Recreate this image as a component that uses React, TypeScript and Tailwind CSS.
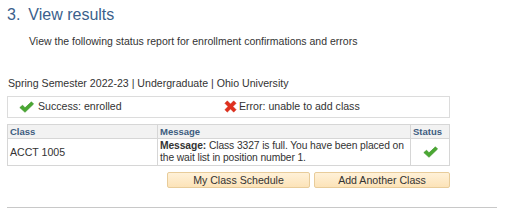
export default function App() {
  return (
    <div className="w-[529px] h-[209px] bg-white overflow-hidden font-['Liberation_Sans',Arial,sans-serif] text-[#333]">
      <div className="pl-[7px] pt-[6px]">
        {/* HEADING */}
        <h1 className="text-[16px] leading-[18px] text-[#3b5f8c]">
          <span>3.</span>
          <span className="ml-[8px]">View results</span>
        </h1>

        <p className="mt-[11px] ml-[22px] text-[10.5px] leading-[13px] text-[#333]">
          View the following status report for enrollment confirmations and errors
        </p>

        <p className="mt-[29px] ml-[1px] text-[10.6px] leading-[13px] text-[#333]">
          Spring Semester 2022-23 | Undergraduate | Ohio University
        </p>

        {/* LEGEND */}
        <div className="mt-[6px] w-[443px] h-[22px] border border-[#dcdcdc] flex items-center text-[10.6px]">
          <div className="flex items-center ml-[11px] w-[205px]">
            <Check />
            <span className="ml-[4px]">Success: enrolled</span>
          </div>
          <div className="flex items-center">
            <Cross />
            <span className="ml-[2px]">Error: unable to add class</span>
          </div>
        </div>

        {/* RESULTS TABLE */}
        <table className="mt-[6px] w-[443px] border-collapse border border-[#d6d6d6] text-[10.6px]">
          <thead>
            <tr className="bg-[#f2f2f2] h-[14px]">
              <th className="text-left font-bold text-[9.5px] leading-[12px] text-[#3e5d80] px-[2px] py-0 border border-[#d6d6d6] w-[150px]">Class</th>
              <th className="text-left font-bold text-[9.5px] leading-[12px] text-[#3e5d80] px-[2px] py-0 border border-[#d6d6d6] w-[253px]">Message</th>
              <th className="text-left font-bold text-[9.5px] leading-[12px] text-[#3e5d80] px-[2px] py-0 border border-[#d6d6d6]">Status</th>
            </tr>
          </thead>
          <tbody>
            <tr className="h-[27px]">
              <td className="px-[2px] py-0 border border-[#d6d6d6] leading-[12px]">ACCT 1005</td>
              <td className="px-[2px] py-0 border border-[#d6d6d6] leading-[12px] text-[10.3px] tracking-[-0.1px]">
                <b>Message:</b> Class 3327 is full. You have been placed on the wait list in position number 1.
              </td>
              <td className="border border-[#d6d6d6]">
                <div className="flex justify-center">
                  <Check />
                </div>
              </td>
            </tr>
          </tbody>
        </table>

        {/* BUTTONS */}
        <div className="mt-[6px] w-[443px] flex justify-end gap-[4px]">
          <button className="w-[143px] h-[16px] rounded-[2px] border border-[#e8cc9a] bg-gradient-to-b from-[#fff1d8] to-[#fce3b8] text-[10.6px] leading-[14px] text-[#333]">
            My Class Schedule
          </button>
          <button className="w-[136px] h-[16px] rounded-[2px] border border-[#e8cc9a] bg-gradient-to-b from-[#fff1d8] to-[#fce3b8] text-[10.6px] leading-[14px] text-[#333]">
            Add Another Class
          </button>
        </div>

        <div className="mt-[19px] w-[490px] border-t border-[#c8c8c8]" />
      </div>
    </div>
  );
}

function Check() {
  return (
    <svg width="15" height="12" viewBox="0 0 15 12">
      <path d="M0.8 6.6 L3.6 4.2 L6 6.8 L12.4 0.8 L14.6 3 L6 11.3 Z" fill="#4aa832" stroke="#3b8f27" strokeWidth="0.6" strokeLinejoin="round" />
    </svg>
  );
}

function Cross() {
  return (
    <svg width="13" height="13" viewBox="0 0 13 13">
      <path d="M0.8 3.3 L3.3 0.8 L6.5 4 L9.7 0.8 L12.2 3.3 L9 6.5 L12.2 9.7 L9.7 12.2 L6.5 9 L3.3 12.2 L0.8 9.7 L4 6.5 Z" fill="#e0301e" stroke="#c42a18" strokeWidth="0.4" strokeLinejoin="round" />
    </svg>
  );
}
